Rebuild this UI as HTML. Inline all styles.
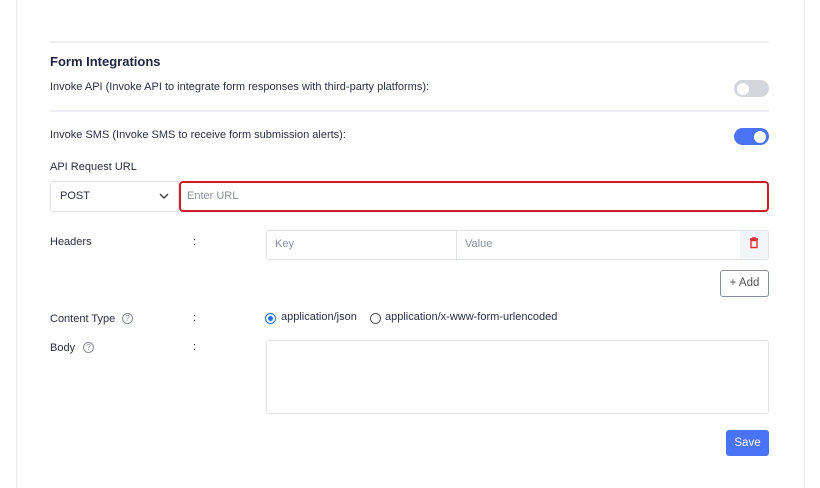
<!DOCTYPE html>
<html><head><meta charset="utf-8"><style>
*{box-sizing:border-box;margin:0;padding:0}
body{width:820px;height:480px;background:#fff;font-family:"Liberation Sans",sans-serif;color:#2a2f45;position:relative;overflow:hidden;font-size:11px}
.a{position:absolute}
.card{left:16px;top:-2px;width:789px;height:490px;border-left:1px solid #ececf0;border-right:1px solid #ececf0}
.hr{height:2px;background:#eef0f3}
.tog{width:35px;height:17px;border-radius:9px}
.knob{position:absolute;top:2.5px;width:12px;height:12px;border-radius:50%;background:#fff}
.box{border:1px solid #dfe2e8;border-radius:3px;background:#fff}
.ph{color:#8a8f9c;font-size:11px}
.t{font-size:11px}
.q{width:11px;height:11px;border:1px solid #8a8f9c;border-radius:50%;font-size:8px;color:#8a8f9c;text-align:center;line-height:9px}
</style></head><body>
<div class="a card"></div>
<div class="a hr" style="left:50px;top:41px;width:719px"></div>
<div class="a" style="left:50px;top:54px;font-size:13px;font-weight:bold;color:#1f2440">Form Integrations</div>
<div class="a t" style="left:50px;top:81px">Invoke API (Invoke API to integrate form responses with third-party platforms):</div>
<div class="a tog" style="left:734px;top:80px;background:#d3d6dc"><div class="knob" style="left:3px"></div></div>
<div class="a hr" style="left:50px;top:110px;width:719px"></div>
<div class="a t" style="left:50px;top:129px">Invoke SMS (Invoke SMS to receive form submission alerts):</div>
<div class="a tog" style="left:734px;top:128px;background:#4a72f5"><div class="knob" style="left:20px"></div></div>
<div class="a t" style="left:50px;top:161px">API Request URL</div>
<div class="a box" style="left:50px;top:181px;width:129px;height:31px;border-radius:3px 0 0 3px"></div>
<div class="a t" style="left:60px;top:190px">POST</div>
<svg class="a" style="left:159px;top:192px" width="10" height="8"><path d="M1 2l4 4 4-4" fill="none" stroke="#333" stroke-width="1.3"/></svg>
<div class="a" style="left:179px;top:181px;width:590px;height:31px;border:2px solid #d01c25;border-radius:4px"></div>
<div class="a ph" style="left:187px;top:190px">Enter URL</div>
<div class="a t" style="left:50px;top:236px">Headers</div>
<div class="a t" style="left:193px;top:236px">:</div>
<div class="a box" style="left:266px;top:230px;width:503px;height:30px"></div>
<div class="a" style="left:456px;top:231px;width:1px;height:28px;background:#dfe2e8"></div>
<div class="a" style="left:740px;top:231px;width:28px;height:28px;background:#f4f5f8"></div>
<svg class="a" style="left:749px;top:237px" width="10" height="12"><path d="M1 2h8M3.5 2V1h3v1M2 3.5h6v7H2z" fill="none" stroke="#e0303a" stroke-width="1.4"/></svg>
<div class="a ph" style="left:275px;top:238px">Key</div>
<div class="a ph" style="left:465px;top:238px">Value</div>
<div class="a" style="left:720px;top:270px;width:49px;height:27px;border:1.5px solid #8a8f9c;border-radius:3px;font-size:11.5px;color:#555;text-align:center;line-height:24px">+ Add</div>
<div class="a t" style="left:50px;top:313px">Content Type</div>
<div class="a q" style="left:122px;top:313px">?</div>
<div class="a t" style="left:193px;top:312px">:</div>
<div class="a" style="left:265px;top:313px;width:11px;height:11px;border-radius:50%;border:1px solid #2f6cf0;background:#fff"><div style="margin:2px;width:5px;height:5px;border-radius:50%;background:#2f6cf0"></div></div>
<div class="a t" style="left:281px;top:311px">application/json</div>
<div class="a" style="left:370px;top:313px;width:11px;height:11px;border-radius:50%;border:1px solid #555"></div>
<div class="a t" style="left:385px;top:311px">application/x-www-form-urlencoded</div>
<div class="a t" style="left:50px;top:342px">Body</div>
<div class="a q" style="left:83px;top:342px">?</div>
<div class="a t" style="left:193px;top:341px">:</div>
<div class="a box" style="left:266px;top:340px;width:503px;height:74px"></div>
<div class="a" style="left:726px;top:430px;width:43px;height:26px;background:#4a72f5;border-radius:3px;color:#fff;font-size:11.5px;text-align:center;line-height:26px">Save</div>
</body></html>
